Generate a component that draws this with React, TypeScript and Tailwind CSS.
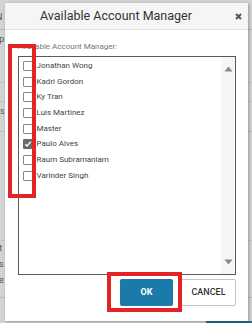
import React from 'react';

const managers = [
  { name: 'Jonathan Wong', checked: false },
  { name: 'Kadri Gordon', checked: false },
  { name: 'Ky Tran', checked: false },
  { name: 'Luis Martinez', checked: false },
  { name: 'Master', checked: false },
  { name: 'Paulo Alves', checked: true },
  { name: 'Raum Subramaniam', checked: false },
  { name: 'Varinder Singh', checked: false },
];

const Checkbox = ({ checked }: { checked: boolean }) =>
  checked ? (
    <span className="flex h-[10px] w-[10px] shrink-0 items-center justify-center rounded-[1px] bg-[#6b6b6b]">
      <svg width="8" height="8" viewBox="0 0 8 8">
        <path d="M1.2 4.2 L3.1 6 L6.8 1.6" fill="none" stroke="#fff" strokeWidth="1.4" />
      </svg>
    </span>
  ) : (
    <span className="h-[10px] w-[10px] shrink-0 rounded-[1px] border border-[#8a8a8a] bg-white" />
  );

const BackgroundPage = () => (
  <div className="flex h-full w-full flex-col text-[9px] text-[#555]">
    <div className="flex h-[30px] items-end justify-between border-b border-[#b9b9b9] pb-[5px]">
      <span className="-ml-[4px]">N</span>
    </div>
    <div className="flex h-[20px] items-center">
      <span className="-ml-[6px]">rip</span>
    </div>
    <div className="h-[33px] border-b border-[#c4c4c4]" />
    <div className="h-[19px] border-b border-[#c4c4c4]" />
    <div className="flex h-[20px] items-center">
      <span className="-ml-[5px]">us</span>
    </div>
    <div className="h-[10px] border-b border-[#b9b9b9]" />
    <div className="h-[101px]" />
    <div className="h-[8px] border-b border-[#c4c4c4]" />
    <div className="flex h-[15px] items-center">
      <span className="-ml-[3px]">it</span>
    </div>
    <div className="flex h-[17px] items-center">
      <span className="-ml-[4px]">ts</span>
    </div>
    <div className="flex h-[15px] items-center">
      <span className="-ml-[6px]">ne</span>
    </div>
    <div className="h-[10px] border-b border-[#b9b9b9]" />
    <div className="flex flex-1 items-end justify-end">
      <div className="h-[2px] w-[46px] bg-[#1f6f8f]" />
    </div>
  </div>
);

export default function App() {
  return (
    <div className="relative h-[323px] w-[252px] overflow-hidden bg-[#d3d3d3] font-['Roboto',sans-serif]">
      <BackgroundPage />

      {/* modal */}
      <div className="absolute left-[5px] top-[3px] flex h-[318px] w-[243px] flex-col bg-white shadow-[1px_1px_3px_rgba(0,0,0,0.3)]">
        <div className="flex h-[27px] shrink-0 items-center border-b border-[#e2e2e2] bg-[#f5f5f5] pl-[35px] pr-[6px]">
          <span className="flex-1 text-[12.5px] leading-none text-[#333]">Available Account Manager</span>
          <svg width="7" height="7" viewBox="0 0 7 7">
            <path d="M1 1 L6 6 M6 1 L1 6" stroke="#555" strokeWidth="2" />
          </svg>
        </div>

        <div className="flex flex-1 flex-col pl-[13px] pr-[12px] pt-[12px]">
          <div className="mb-[4px] h-[10px] text-[8px] leading-[10px] text-[#777]">Available Account Manager:</div>

          <div className="flex h-[219px] border border-[#5a5a5a]">
            <ul className="flex-1 pt-[1px]">
              {managers.map((m) => (
                <li key={m.name} className="flex h-[15.7px] items-center gap-[3.5px] pl-[4px]">
                  <Checkbox checked={m.checked} />
                  <span className="text-[8px] leading-none text-[#444]">{m.name}</span>
                </li>
              ))}
            </ul>
            <div className="flex w-[14px] flex-col items-center justify-between bg-[#f6f6f6] py-[9px]">
              <svg width="9" height="6" viewBox="0 0 9 6">
                <path d="M4.5 0.5 L8.5 5.5 L0.5 5.5 Z" fill="#8a8a8a" />
              </svg>
              <svg width="9" height="6" viewBox="0 0 9 6">
                <path d="M0.5 0.5 L8.5 0.5 L4.5 5.5 Z" fill="#8a8a8a" />
              </svg>
            </div>
          </div>

          <div className="mt-[4px] flex justify-end gap-[8px]">
            <button className="flex h-[27px] w-[53px] items-center justify-center rounded-[2px] bg-[#1a7aa9] text-[9px] font-bold text-white">
              OK
            </button>
            <button className="flex h-[27px] w-[55px] items-center justify-center rounded-[2px] border border-[#c4c4c4] bg-white text-[9px] font-medium text-[#333]">
              CANCEL
            </button>
          </div>
        </div>
      </div>

      {/* annotation boxes */}
      <div className="absolute left-[8px] top-[44px] h-[154px] w-[28px] border-4 border-[#e42424]" />
      <div className="absolute left-[107px] top-[272px] h-[40px] w-[75px] border-4 border-[#e42424]" />
    </div>
  );
}
